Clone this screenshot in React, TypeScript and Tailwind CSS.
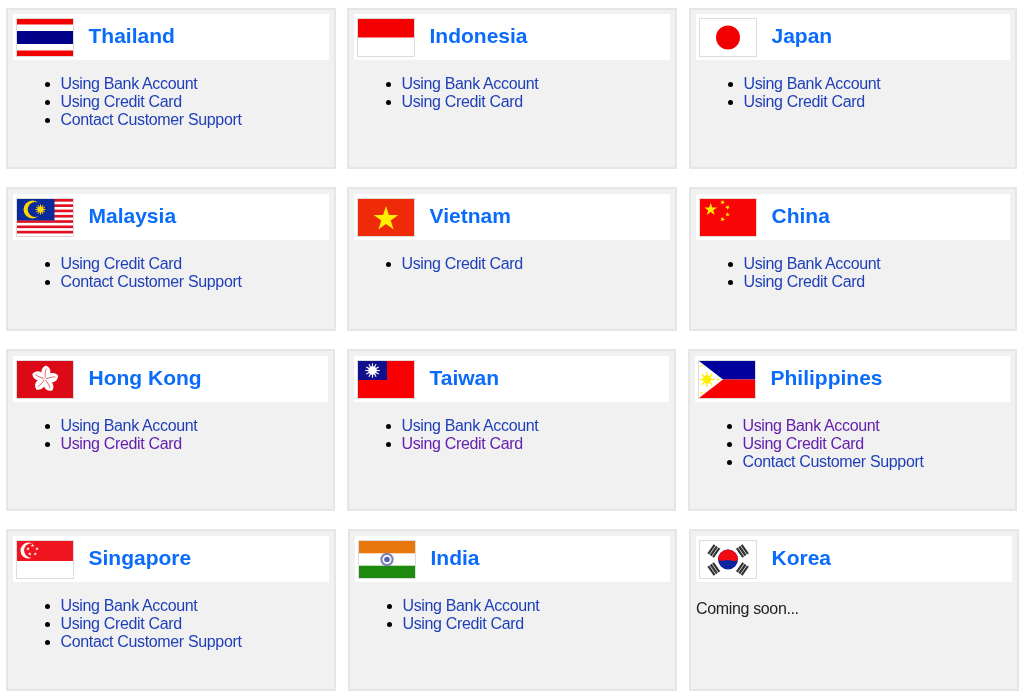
import React from 'react';

const star = (cx: number, cy: number, r: number, rot = 0) => {
  const pts: string[] = [];
  for (let i = 0; i < 10; i++) {
    const rad = i % 2 === 0 ? r : r * 0.382;
    const a = ((-90 + rot + i * 36) * Math.PI) / 180;
    pts.push(`${(cx + rad * Math.cos(a)).toFixed(2)},${(cy + rad * Math.sin(a)).toFixed(2)}`);
  }
  return pts.join(' ');
};

const rays = (cx: number, cy: number, r1: number, r2: number, n: number) =>
  Array.from({ length: n }, (_, i) => {
    const a = (i * 2 * Math.PI) / n;
    return (
      <line
        key={i}
        x1={cx + r1 * Math.cos(a)}
        y1={cy + r1 * Math.sin(a)}
        x2={cx + r2 * Math.cos(a)}
        y2={cy + r2 * Math.sin(a)}
      />
    );
  });

const Flag: React.FC<{ children: React.ReactNode }> = ({ children }) => (
  <div className="w-[58px] h-[39px] shrink-0 border border-[#dcdcdc] bg-white">
    <svg viewBox="0 0 56 37" preserveAspectRatio="none" className="block w-full h-full">
      {children}
    </svg>
  </div>
);

const Thailand = () => (
  <Flag>
    <rect width="56" height="37" fill="#fff" />
    <rect width="56" height="5.5" fill="#f50000" />
    <rect y="12" width="56" height="13" fill="#00008b" />
    <rect y="31.5" width="56" height="5.5" fill="#f50000" />
  </Flag>
);

const Indonesia = () => (
  <Flag>
    <rect width="56" height="18.5" fill="#f50000" />
  </Flag>
);

const Japan = () => (
  <Flag>
    <circle cx="28" cy="18.5" r="12" fill="#f00000" />
  </Flag>
);

const Malaysia = () => (
  <Flag>
    <rect width="56" height="37" fill="#fff" />
    {[0, 1, 2, 3, 4, 5, 6].map((i) => (
      <rect key={i} y={i * 5.3} width="56" height="2.65" fill="#e01020" />
    ))}
    <rect width="37.5" height="21.5" fill="#0a2a9c" />
    <circle cx="15.5" cy="10.5" r="9" fill="#ffd500" />
    <circle cx="18.3" cy="10.5" r="7.6" fill="#0a2a9c" />
    <g stroke="#ffd500" strokeWidth="1">{rays(23.5, 10.5, 2, 5, 12)}</g>
    <circle cx="23.5" cy="10.5" r="3" fill="#ffd500" />
  </Flag>
);

const Vietnam = () => (
  <Flag>
    <rect width="56" height="37" fill="#ee2a08" />
    <polygon points={star(28, 20, 13)} fill="#ffee00" />
  </Flag>
);

const China = () => (
  <Flag>
    <rect width="56" height="37" fill="#f80606" />
    <polygon points={star(10.7, 10.5, 6.8)} fill="#ffea00" />
    <polygon points={star(22.5, 3.3, 2.6, 20)} fill="#ffea00" />
    <polygon points={star(27.5, 8.3, 2.6, 40)} fill="#ffea00" />
    <polygon points={star(27.5, 15.5, 2.6, 0)} fill="#ffea00" />
    <polygon points={star(22.5, 20.3, 2.6, 20)} fill="#ffea00" />
  </Flag>
);

const HongKong = () => (
  <Flag>
    <rect width="56" height="37" fill="#dc0a16" />
    {[0, 72, 144, 216, 288].map((r) => (
      <g key={r} transform={`rotate(${r + 10} 28 18)`}>
        <path d="M28 18C21.5 15 22 7 26.5 4.5C33.5 6 34 14 28 18Z" fill="#fff" />
        <path d="M28 17C27 13 27 10 27.5 7.5" fill="none" stroke="#dc0a16" strokeWidth="0.6" />
      </g>
    ))}
  </Flag>
);

const Taiwan = () => (
  <Flag>
    <rect width="56" height="37" fill="#f80000" />
    <rect width="29" height="19" fill="#10108c" />
    <g stroke="#fff" strokeWidth="1.1">{rays(14.5, 9.5, 3, 7.2, 12)}</g>
    <circle cx="14.5" cy="9.5" r="4.2" fill="#fff" />
  </Flag>
);

const Philippines = () => (
  <Flag>
    <rect width="56" height="18.5" fill="#00009c" />
    <rect y="18.5" width="56" height="18.5" fill="#f80000" />
    <polygon points="0,0 24,18.5 0,37" fill="#fff" />
    <g stroke="#ffee00" strokeWidth="1.3">{rays(8, 18.5, 3, 7.5, 8)}</g>
    <circle cx="8" cy="18.5" r="4.2" fill="#ffee00" />
    <circle cx="2.5" cy="5" r="1.1" fill="#ffee00" />
    <circle cx="2.5" cy="32" r="1.1" fill="#ffee00" />
    <circle cx="19" cy="18.5" r="1.1" fill="#ffee00" />
  </Flag>
);

const Singapore = () => (
  <Flag>
    <rect width="56" height="20" fill="#f0141e" />
    <circle cx="11.5" cy="9.6" r="8" fill="#fff" />
    <circle cx="14.5" cy="9.6" r="7.4" fill="#f0141e" />
    {[
      [15.5, 4.5],
      [20, 7.8],
      [18.2, 13],
      [12.8, 13],
      [11, 7.8],
    ].map(([x, y]) => (
      <polygon key={x + y} points={star(x, y, 2)} fill="#fff" />
    ))}
  </Flag>
);

const India = () => (
  <Flag>
    <rect width="56" height="12.3" fill="#e8780e" />
    <rect y="24.7" width="56" height="12.3" fill="#1f8a10" />
    <circle cx="28" cy="18.5" r="5.6" fill="none" stroke="#7c84b4" strokeWidth="2.2" />
    <circle cx="28" cy="18.5" r="2.8" fill="#5560b0" />
  </Flag>
);

const Trigram = ({ x, y, r }: { x: number; y: number; r: number }) => (
  <g transform={`rotate(${r} ${x} ${y})`} fill="#333">
    <rect x={x - 5.5} y={y - 4} width="11" height="2.2" />
    <rect x={x - 5.5} y={y - 1.1} width="11" height="2.2" />
    <rect x={x - 5.5} y={y + 1.8} width="11" height="2.2" />
  </g>
);

const Korea = () => (
  <Flag>
    <circle cx="28" cy="18.5" r="10" fill="#0a24a0" />
    <path d="M18 18.5A10 10 0 0 1 38 18.5C35 21.5 32 19.5 28 19C24 18.5 21 21.5 18 18.5Z" fill="#f00a14" />
    <Trigram x={13.8} y={10} r={-55} />
    <Trigram x={42.4} y={10} r={55} />
    <Trigram x={13.8} y={28} r={55} />
    <Trigram x={42.4} y={28} r={-55} />
  </Flag>
);

type Item = { label: string; visited?: boolean };

const Card: React.FC<{
  name: string;
  flag: React.ReactNode;
  items?: Item[];
  soon?: boolean;
  headerTop: string;
}> = ({ name, flag, items, soon, headerTop }) => (
  <div className="border-2 border-[#e6e6e6] bg-[#f1f1f1] px-[5px]">
    <div className={`${headerTop} h-[46px] bg-white flex items-center pl-[3px] gap-[14.5px]`}>
      {flag}
      <h2 className="text-[21px] font-bold text-[#0b6cfb] leading-none pb-[3px]">{name}</h2>
    </div>
    {soon ? (
      <p className="mt-[18px] text-[16px] tracking-[-0.35px] leading-[18px] text-[#222]">Coming soon...</p>
    ) : (
      <ul className="mt-[15px] pl-[47.5px] list-disc text-[16px] tracking-[-0.35px] leading-[18px] text-black">
        {(items ?? []).map((it) => (
          <li key={it.label}>
            <a className={it.visited ? 'text-[#6420ae]' : 'text-[#1f3fb8]'}>{it.label}</a>
          </li>
        ))}
      </ul>
    )}
  </div>
);

const bank = 'Using Bank Account';
const credit = 'Using Credit Card';
const support = 'Contact Customer Support';

export default function App() {
  return (
    <div className="w-[1024px] h-[696px] bg-white pt-[8px] pl-[6px] overflow-hidden blur-[0.35px] font-['Liberation_Sans',Arial,sans-serif]">
      <div className="grid grid-cols-[330px_330px_329px] gap-x-[11px] h-[161px] [&>*:last-child]:ml-[1px]">
        <Card headerTop="mt-[4px]" name="Thailand" flag={<Thailand />} items={[{ label: bank }, { label: credit }, { label: support }]} />
        <Card headerTop="mt-[4px]" name="Indonesia" flag={<Indonesia />} items={[{ label: bank }, { label: credit }]} />
        <Card headerTop="mt-[4px]" name="Japan" flag={<Japan />} items={[{ label: bank }, { label: credit }]} />
      </div>
      <div className="grid grid-cols-[330px_330px_329px] gap-x-[11px] mt-[18px] h-[144px] [&>*:last-child]:ml-[1px]">
        <Card headerTop="mt-[5px]" name="Malaysia" flag={<Malaysia />} items={[{ label: credit }, { label: support }]} />
        <Card headerTop="mt-[5px]" name="Vietnam" flag={<Vietnam />} items={[{ label: credit }]} />
        <Card headerTop="mt-[5px]" name="China" flag={<China />} items={[{ label: bank }, { label: credit }]} />
      </div>
      <div className="grid grid-cols-[329px_329px_329px] gap-x-[12px] mt-[18px] h-[162px]">
        <Card headerTop="mt-[5px]" name="Hong Kong" flag={<HongKong />} items={[{ label: bank }, { label: credit, visited: true }]} />
        <Card headerTop="mt-[5px]" name="Taiwan" flag={<Taiwan />} items={[{ label: bank }, { label: credit, visited: true }]} />
        <Card headerTop="mt-[5px]" name="Philippines" flag={<Philippines />} items={[{ label: bank, visited: true }, { label: credit, visited: true }, { label: support }]} />
      </div>
      <div className="grid grid-cols-[330px_329px_330px] gap-x-[12px] mt-[18px] h-[162px]">
        <Card headerTop="mt-[5px]" name="Singapore" flag={<Singapore />} items={[{ label: bank }, { label: credit }, { label: support }]} />
        <Card headerTop="mt-[5px]" name="India" flag={<India />} items={[{ label: bank }, { label: credit }]} />
        <Card headerTop="mt-[5px]" name="Korea" flag={<Korea />} soon />
      </div>
    </div>
  );
}
